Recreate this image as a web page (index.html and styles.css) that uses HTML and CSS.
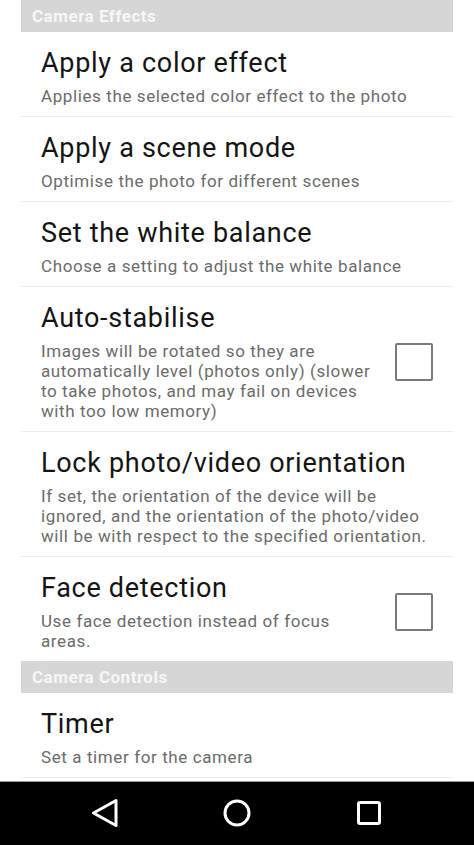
FILE: index.html
```html
<!DOCTYPE html>
<html>
<head>
<meta charset="utf-8">
<link rel="stylesheet" href="styles.css">
</head>
<body>
<div class="screen">
  <div class="content">
    <div class="category">Camera Effects</div>
    <div class="pref">
      <div class="text">
        <div class="title">Apply a color effect</div>
        <div class="summary">Applies the selected color effect to the photo</div>
      </div>
    </div>
    <div class="pref">
      <div class="text">
        <div class="title">Apply a scene mode</div>
        <div class="summary">Optimise the photo for different scenes</div>
      </div>
    </div>
    <div class="pref">
      <div class="text">
        <div class="title">Set the white balance</div>
        <div class="summary">Choose a setting to adjust the white balance</div>
      </div>
    </div>
    <div class="pref">
      <div class="text narrow">
        <div class="title">Auto-stabilise</div>
        <div class="summary">Images will be rotated so they are automatically level (photos only) (slower to take photos, and may fail on devices with too low memory)</div>
      </div>
      <div class="checkbox"></div>
    </div>
    <div class="pref">
      <div class="text">
        <div class="title">Lock photo/video orientation</div>
        <div class="summary">If set, the orientation of the device will be ignored, and the orientation of the photo/video will be with respect to the specified orientation.</div>
      </div>
    </div>
    <div class="pref last">
      <div class="text narrow">
        <div class="title">Face detection</div>
        <div class="summary">Use face detection instead of focus areas.</div>
      </div>
      <div class="checkbox"></div>
    </div>
    <div class="category">Camera Controls</div>
    <div class="pref">
      <div class="text">
        <div class="title">Timer</div>
        <div class="summary">Set a timer for the camera</div>
      </div>
    </div>
  </div>
  <div class="nav">
    <svg class="navicon" width="32" height="32" viewBox="0 0 32 32">
      <path d="M27 3.5 L4.5 16 L27 28.5 Z" fill="none" stroke="#fff" stroke-width="3" stroke-linejoin="round"/>
    </svg>
    <svg class="navicon" width="32" height="32" viewBox="0 0 32 32">
      <circle cx="16" cy="16" r="12" fill="none" stroke="#fff" stroke-width="3"/>
    </svg>
    <svg class="navicon" width="32" height="32" viewBox="0 0 32 32">
      <rect x="5.5" y="5.5" width="21" height="21" rx="1.5" fill="none" stroke="#fff" stroke-width="3"/>
    </svg>
  </div>
</div>
</body>
</html>
```
FILE: styles.css
```css
html, body {
  margin: 0;
  padding: 0;
  background: #ffffff;
}

.screen {
  width: 474px;
  height: 845px;
  display: flex;
  flex-direction: column;
  overflow: hidden;
  font-family: Roboto, "Liberation Sans", sans-serif;
}

.content {
  flex: 0 0 781px;
  height: 781px;
  overflow: hidden;
  padding: 0 21px;
  background: #ffffff;
}

.category {
  height: 32px;
  line-height: 32px;
  background: #d6d6d6;
  color: #f7f7f7;
  font-size: 17px;
  font-weight: bold;
  letter-spacing: 0.5px;
  padding-left: 11px;
  white-space: nowrap;
}

.pref {
  display: flex;
  align-items: center;
  padding: 15px 20px 10px 20px;
  border-bottom: 1px solid #ececec;
}

.pref.last {
  border-bottom: none;
}

.text {
  flex: 1;
  min-width: 0;
}

.text.narrow {
  margin-right: 22px;
}

.title {
  font-size: 27px;
  line-height: 32px;
  letter-spacing: 0.7px;
  color: #141414;
  margin-bottom: 7px;
  white-space: nowrap;
}

.summary {
  font-size: 17px;
  line-height: 20px;
  letter-spacing: 0.6px;
  color: #6b6b6b;
}

.checkbox {
  flex: 0 0 auto;
  width: 34px;
  height: 34px;
  border: 2.5px solid #7a7a7a;
  border-radius: 2px;
}

.nav {
  flex: 0 0 64px;
  height: 64px;
  background: #000000;
  border-top: 1px solid #9a9a9a;
  box-sizing: border-box;
  display: flex;
  justify-content: center;
  align-items: center;
  gap: 100px;
  padding-bottom: 2px;
}

.navicon {
  display: block;
}
```
